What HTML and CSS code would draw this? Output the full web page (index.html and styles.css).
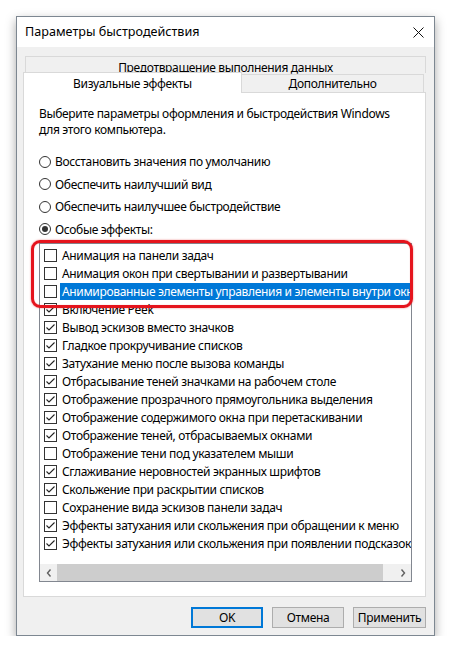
FILE: index.html
```html
<!DOCTYPE html>
<html lang="ru">
<head>
<meta charset="utf-8">
<title>Параметры быстродействия</title>
<link rel="stylesheet" href="styles.css">
</head>
<body>
<div class="window">
  <div class="titlebar">
    <span class="title">Параметры быстродействия</span>
    <svg class="close" width="11" height="11" viewBox="0 0 11 11"><path d="M0.5 0.5L10.5 10.5M10.5 0.5L0.5 10.5" stroke="#111" stroke-width="1" fill="none"/></svg>
  </div>
  <div class="client">
    <div class="tabs">
      <div class="tabrow back"><div class="tab">Предотвращение выполнения данных</div></div>
      <div class="tabrow front">
        <div class="tab selected">Визуальные эффекты</div>
        <div class="tab other">Дополнительно</div>
      </div>
    </div>
    <div class="panel">
      <p class="desc">Выберите параметры оформления и быстродействия Windows<br>для этого компьютера.</p>
      <div class="radios">
        <div class="radio"><span class="rb"></span><span>Восстановить значения по умолчанию</span></div>
        <div class="radio"><span class="rb"></span><span>Обеспечить наилучший вид</span></div>
        <div class="radio"><span class="rb"></span><span>Обеспечить наилучшее быстродействие</span></div>
        <div class="radio"><span class="rb on"></span><span>Особые эффекты:</span></div>
      </div>
      <div class="listbox">
        <div class="items">
          <div class="item"><span class="cb"></span><span class="txt">Анимация на панели задач</span></div>
          <div class="item"><span class="cb"></span><span class="txt">Анимация окон при свертывании и развертывании</span></div>
          <div class="item"><span class="cb"></span><span class="txt sel">Анимированные элементы управления и элементы внутри окна</span></div>
          <div class="item"><span class="cb"><svg viewBox="0 0 13 13" width="13" height="13"><path d="M2.5 6.5L5 9L10.5 3.5" stroke="#222" stroke-width="1.1" fill="none"/></svg></span><span class="txt">Включение Peek</span></div>
          <div class="item"><span class="cb"><svg viewBox="0 0 13 13" width="13" height="13"><path d="M2.5 6.5L5 9L10.5 3.5" stroke="#222" stroke-width="1.1" fill="none"/></svg></span><span class="txt">Вывод эскизов вместо значков</span></div>
          <div class="item"><span class="cb"><svg viewBox="0 0 13 13" width="13" height="13"><path d="M2.5 6.5L5 9L10.5 3.5" stroke="#222" stroke-width="1.1" fill="none"/></svg></span><span class="txt">Гладкое прокручивание списков</span></div>
          <div class="item"><span class="cb"><svg viewBox="0 0 13 13" width="13" height="13"><path d="M2.5 6.5L5 9L10.5 3.5" stroke="#222" stroke-width="1.1" fill="none"/></svg></span><span class="txt">Затухание меню после вызова команды</span></div>
          <div class="item"><span class="cb"><svg viewBox="0 0 13 13" width="13" height="13"><path d="M2.5 6.5L5 9L10.5 3.5" stroke="#222" stroke-width="1.1" fill="none"/></svg></span><span class="txt">Отбрасывание теней значками на рабочем столе</span></div>
          <div class="item"><span class="cb"><svg viewBox="0 0 13 13" width="13" height="13"><path d="M2.5 6.5L5 9L10.5 3.5" stroke="#222" stroke-width="1.1" fill="none"/></svg></span><span class="txt">Отображение прозрачного прямоугольника выделения</span></div>
          <div class="item"><span class="cb"><svg viewBox="0 0 13 13" width="13" height="13"><path d="M2.5 6.5L5 9L10.5 3.5" stroke="#222" stroke-width="1.1" fill="none"/></svg></span><span class="txt">Отображение содержимого окна при перетаскивании</span></div>
          <div class="item"><span class="cb"><svg viewBox="0 0 13 13" width="13" height="13"><path d="M2.5 6.5L5 9L10.5 3.5" stroke="#222" stroke-width="1.1" fill="none"/></svg></span><span class="txt">Отображение теней, отбрасываемых окнами</span></div>
          <div class="item"><span class="cb"></span><span class="txt">Отображение тени под указателем мыши</span></div>
          <div class="item"><span class="cb"><svg viewBox="0 0 13 13" width="13" height="13"><path d="M2.5 6.5L5 9L10.5 3.5" stroke="#222" stroke-width="1.1" fill="none"/></svg></span><span class="txt">Сглаживание неровностей экранных шрифтов</span></div>
          <div class="item"><span class="cb"><svg viewBox="0 0 13 13" width="13" height="13"><path d="M2.5 6.5L5 9L10.5 3.5" stroke="#222" stroke-width="1.1" fill="none"/></svg></span><span class="txt">Скольжение при раскрытии списков</span></div>
          <div class="item"><span class="cb"></span><span class="txt">Сохранение вида эскизов панели задач</span></div>
          <div class="item"><span class="cb"><svg viewBox="0 0 13 13" width="13" height="13"><path d="M2.5 6.5L5 9L10.5 3.5" stroke="#222" stroke-width="1.1" fill="none"/></svg></span><span class="txt">Эффекты затухания или скольжения при обращении к меню</span></div>
          <div class="item"><span class="cb"><svg viewBox="0 0 13 13" width="13" height="13"><path d="M2.5 6.5L5 9L10.5 3.5" stroke="#222" stroke-width="1.1" fill="none"/></svg></span><span class="txt">Эффекты затухания или скольжения при появлении подсказок</span></div>
        </div>
        <div class="hscroll">
          <span class="arrow"><svg width="6" height="8" viewBox="0 0 6 8"><path d="M4.5 0.5L1.5 4L4.5 7.5" stroke="#606060" stroke-width="1.4" fill="none"/></svg></span>
          <span class="thumb"></span>
          <span class="track"></span>
          <span class="arrow"><svg width="6" height="8" viewBox="0 0 6 8"><path d="M1.5 0.5L4.5 4L1.5 7.5" stroke="#606060" stroke-width="1.4" fill="none"/></svg></span>
        </div>
        <div class="annot"></div>
      </div>
    </div>
    <div class="buttons">
      <div class="btn default">OK</div>
      <div class="btn">Отмена</div>
      <div class="btn wide">Применить</div>
    </div>
  </div>
</div>
</body>
</html>
```

FILE: styles.css
```css
* { box-sizing: border-box; }
html, body { margin: 0; padding: 0; background: #fff; }
body {
  font-family: "Noto Sans", "Open Sans", sans-serif;
  font-size: 12px;
  letter-spacing: -0.33px;
  color: #000;
}
.window {
  margin: 16px 0 0 16px;
  width: 419px;
  height: 620px;
  border: 1px solid #7d8791;
  box-shadow: 0 4px 10px rgba(0,0,0,0.35);
  background: #f0f0f0;
  display: flex;
  flex-direction: column;
}
.titlebar {
  height: 30px;
  background: #fff;
  display: flex;
  align-items: center;
  justify-content: space-between;
  padding: 0 10px 0 8px;
}
.title { font-size: 12.6px; letter-spacing: 0; line-height: 16px; }
.close { display: block; }
.client {
  flex: 1;
  padding: 9px 8px 0 6px;
  display: flex;
  flex-direction: column;
}
.tabs { display: flex; flex-direction: column; }
.tabrow { display: flex; }
.tabrow.back { height: 17px; margin-left: 2px; }
.tabrow.back .tab {
  width: 401px;
  height: 17px;
  border: 1px solid #d9d9d9;
  border-bottom: none;
  background: #f0f0f0;
  text-align: center;
  line-height: 21px;
}
.tabrow.front { height: 19px; align-items: flex-end; }
.tab.selected {
  width: 219px;
  height: 21px;
  margin-bottom: -1px;
  background: #fff;
  border: 1px solid #d9d9d9;
  border-bottom: none;
  text-align: center;
  padding-top: 2px;
  line-height: 18px;
  position: relative;
  z-index: 1;
}
.tab.other {
  width: 182px;
  height: 18px;
  background: #f0f0f0;
  border: 1px solid #d9d9d9;
  border-left: none;
  border-bottom: none;
  text-align: center;
  line-height: 18px;
}
.panel {
  width: 403px;
  height: 505px;
  background: #fff;
  border: 1px solid #d9d9d9;
  padding: 13px 0 0 15px;
}
.desc { margin: 0; line-height: 16px; }
.radios { margin-top: 12.5px; }
.radio {
  height: 22.5px;
  display: flex;
  align-items: center;
  gap: 4px;
}
.rb {
  width: 12px;
  height: 12px;
  border: 1px solid #333;
  border-radius: 50%;
  background: #fff;
  display: flex;
  align-items: center;
  justify-content: center;
}
.rb.on::after {
  content: "";
  width: 6px;
  height: 6px;
  border-radius: 50%;
  background: #333;
}
.listbox {
  position: relative;
  margin-top: 2.5px;
  width: 373px;
  height: 339px;
  border: 1px solid #828790;
  display: flex;
  flex-direction: column;
}
.items {
  height: 320px;
  overflow: hidden;
  padding-top: 2px;
}
.item {
  height: 18px;
  display: flex;
  align-items: center;
  padding-left: 4px;
  white-space: nowrap;
}
.cb {
  flex: none;
  width: 13px;
  height: 13px;
  border: 1px solid #333;
  background: #fff;
  position: relative;
}
.cb svg { position: absolute; left: -1px; top: -1px; }
.txt {
  flex: 1;
  margin-left: 3px;
  padding-left: 2px;
  height: 17px;
  line-height: 17px;
  overflow: hidden;
}
.txt.sel { background: #0078d7; color: #fff; }
.hscroll {
  height: 17px;
  display: flex;
  background: #f0f0f0;
}
.arrow {
  width: 17px;
  display: flex;
  align-items: center;
  justify-content: center;
}
.thumb { width: 326px; background: #cdcdcd; }
.track { flex: 1; }
.annot {
  position: absolute;
  left: -9px;
  top: -4px;
  width: 382px;
  height: 68px;
  border: 3px solid #e5141d;
  border-radius: 9px;
  box-shadow: 0 0 2px rgba(220,0,0,0.5), inset 0 0 1px rgba(220,0,0,0.4);
}
.buttons {
  margin-top: 10px;
  display: flex;
  justify-content: flex-end;
  gap: 9px;
}
.btn {
  width: 72px;
  height: 21px;
  background: #e1e1e1;
  border: 1px solid #adadad;
  text-align: center;
  line-height: 19px;
}
.btn.wide { width: 73px; }
.btn.default { border: 2px solid #0078d7; line-height: 17px; }
```
